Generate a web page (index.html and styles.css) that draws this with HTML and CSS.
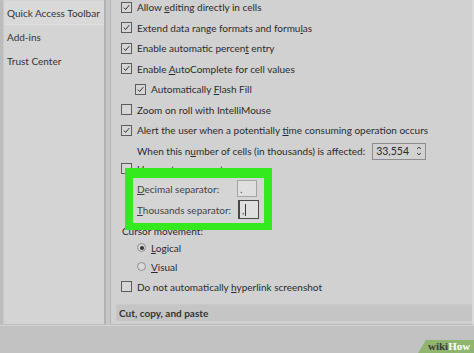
FILE: index.html
```html
<!DOCTYPE html>
<html>
<head>
<meta charset="utf-8">
<link rel="stylesheet" href="styles.css">
</head>
<body>
<div class="screen">
  <div class="window">
    <div class="edge"></div>
    <nav class="sidebar">
      <div class="nav-item selected">Quick Access Toolbar</div>
      <div class="nav-item">Add-ins</div>
      <div class="nav-item">Trust Center</div>
    </nav>
    <div class="gutter"></div>
    <main class="content">
      <div class="options">
        <div class="row r20"><span class="cb checked"><svg viewBox="0 0 11 11"><path d="M2.3 5.6 L4.4 7.9 L8.9 2.6"/></svg></span><span>Allow <u>e</u>diting directly in cells</span></div>
        <div class="row r20"><span class="cb checked"><svg viewBox="0 0 11 11"><path d="M2.3 5.6 L4.4 7.9 L8.9 2.6"/></svg></span><span>Extend data range formats and formu<u>l</u>as</span></div>
        <div class="row r20"><span class="cb checked"><svg viewBox="0 0 11 11"><path d="M2.3 5.6 L4.4 7.9 L8.9 2.6"/></svg></span><span>Enable automatic percen<u>t</u> entry</span></div>
        <div class="row r20"><span class="cb checked"><svg viewBox="0 0 11 11"><path d="M2.3 5.6 L4.4 7.9 L8.9 2.6"/></svg></span><span>Enable <u>A</u>utoComplete for cell values</span></div>
        <div class="row r20 indent"><span class="cb checked"><svg viewBox="0 0 11 11"><path d="M2.3 5.6 L4.4 7.9 L8.9 2.6"/></svg></span><span>Automatically <u>F</u>lash Fill</span></div>
        <div class="row r20"><span class="cb"></span><span>Zoom on roll with IntelliMouse</span></div>
        <div class="row r20"><span class="cb checked"><svg viewBox="0 0 11 11"><path d="M2.3 5.6 L4.4 7.9 L8.9 2.6"/></svg></span><span>Alert the user when a potentially <u>t</u>ime consuming operation occurs</span></div>
        <div class="row r21 sub"><span>When this n<u>u</u>mber of cells (in thousands) is affected:</span>
          <span class="spin"><span class="spin-val">33,554</span><svg class="spin-arrows" viewBox="0 0 6 12"><path d="M1.2 4 L3 2 L4.8 4"/><path d="M1.2 8 L3 10 L4.8 8"/></svg></span>
        </div>
        <div class="row r17 custom"><span class="cb"></span><span>Use custom separators</span></div>
        <div class="row r20 sep"><span class="sep-label"><u>D</u>ecimal separator:</span><span class="sep-box">.</span></div>
        <div class="row r22 sep"><span class="sep-label"><u>T</u>housands separator:</span><span class="sep-box focus">,<span class="caret"></span></span></div>
        <div class="row r18 plain"><span>Cursor movement:</span></div>
        <div class="row r18 radio-row"><span class="radio on"></span><span><u>L</u>ogical</span></div>
        <div class="row r20 radio-row"><span class="radio"></span><span><u>V</u>isual</span></div>
        <div class="row r20"><span class="cb"></span><span>Do not automatically <u>h</u>yperlink screenshot</span></div>
      </div>
      <div class="section-head">Cut, copy, and paste</div>
    </main>
  </div>
  <div class="footer"></div>
  <div class="highlight"></div>
  <div class="badge"><span class="wiki">wiki</span><span class="how">How</span></div>
</div>
</body>
</html>
```
FILE: styles.css
```css
* { box-sizing: border-box; }
html, body { margin: 0; padding: 0; }
body {
  width: 474px;
  height: 353px;
  overflow: hidden;
  background: #c3c3c3;
  font-family: Lato, "Open Sans", "Noto Sans", sans-serif;
  font-size: 10px;
  color: #2b2b2b;
}
.screen {
  position: relative;
  width: 474px;
  height: 353px;
  overflow: hidden;
}
.window {
  display: flex;
  height: 325px;
}
.edge {
  width: 4px;
  background: #bcbcbc;
  border-right: 1px solid #c9c9c9;
}
.sidebar {
  width: 102px;
  background: #d4d4d4;
  border-right: 2px solid #b2b2b2;
  border-bottom: 1px solid #bdbdbd;
  padding-top: 1px;
}
.nav-item {
  height: 24px;
  display: flex;
  align-items: center;
  padding-left: 3px;
  white-space: nowrap;
  color: #333;
}
.nav-item.selected {
  background: #d9d9d9;
  border-bottom: 1px solid #e0e0e0;
}
.gutter {
  width: 5px;
  background: #c7c7c7;
  border-right: 1px solid #b5b5b5;
}
.content {
  flex: 1;
  background: #d1d1d1;
  padding-left: 5px;
  border-right: 2px solid #dadada;
  border-bottom: 1px solid #bcbcbc;
  display: flex;
  flex-direction: column;
}
.options {
  margin-top: -3px;
  padding-left: 5px;
}
.row {
  display: flex;
  align-items: center;
  white-space: nowrap;
}
.r17 { height: 17px; }
.r18 { height: 18px; }
.r20 { height: 20.5px; }
.r21 { height: 21px; }
.r22 { height: 22px; }
.row.r20.sep { height: 20px; }
.row.radio-row.r20 { height: 20px; }
.custom { align-items: flex-start; padding-top: 1px; }
.indent { padding-left: 14px; }
.sub { padding-left: 16px; }
.plain { padding-left: 1px; padding-top: 3px; }
.cb {
  width: 11px;
  height: 11px;
  border: 1px solid #5c5c5c;
  background: #d6d6d6;
  margin-right: 5px;
  flex: none;
  display: flex;
}
.cb svg {
  width: 9px;
  height: 9px;
  fill: none;
  stroke: #2a2a2a;
  stroke-width: 1.2;
}
.spin {
  margin-left: 7px;
  width: 54px;
  height: 17px;
  border: 1px solid #8d8d8d;
  display: flex;
  align-items: center;
  padding-left: 3px;
  font-size: 10.5px;
}
.spin-val { flex: 1; }
.spin-arrows {
  width: 6px;
  height: 12px;
  margin-right: 3px;
  fill: none;
  stroke: #444;
  stroke-width: 1;
}
.sep { padding-left: 16px; }
.sep-label { width: 100px; }
.sep-box {
  width: 20px;
  height: 17px;
  border: 1px solid #9a9a9a;
  background: #dcdcdc;
  padding-left: 2px;
  display: flex;
  align-items: center;
  line-height: 1;
}
.sep-box.focus {
  width: 21px;
  height: 19px;
  margin-left: 1px;
  border: 1px solid #333;
  border-left-width: 2px;
}
.caret {
  width: 1px;
  height: 12px;
  background: #222;
  margin-left: 1px;
}
.radio-row { padding-left: 16px; }
.radio {
  width: 9px;
  height: 9px;
  border-radius: 50%;
  border: 1px solid #8e8e8e;
  background: #d8d8d8;
  margin-right: 5px;
  flex: none;
  display: flex;
  align-items: center;
  justify-content: center;
}
.radio.on::after {
  content: "";
  width: 4px;
  height: 4px;
  border-radius: 50%;
  background: #333;
}
.section-head {
  margin-top: 6.5px;
  height: 17px;
  background: #c5c5c5;
  border-top: 1px solid #c9c9c9;
  display: flex;
  align-items: center;
  padding-left: 3px;
  font-weight: 700;
  color: #333;
}
.footer {
  height: 28px;
  background: #c2c2c2;
  border-top: 1px solid #d3d3d3;
}
.highlight {
  position: absolute;
  left: 125px;
  top: 168px;
  width: 147px;
  height: 62px;
  border-style: solid;
  border-color: #34ea1f;
  border-width: 10px 8px 7px 8px;
  background: rgba(255, 255, 255, 0.1);
}
.badge {
  position: absolute;
  left: 418px;
  top: 340px;
  width: 56px;
  height: 13px;
  background: #8fb56f;
  clip-path: polygon(14% 0, 100% 0, 100% 100%, 0 100%);
  font-family: "Liberation Serif", "DejaVu Serif", serif;
  font-weight: 700;
  font-size: 11px;
  line-height: 13px;
  padding-left: 10px;
  white-space: nowrap;
  overflow: hidden;
}
.wiki { color: #3a3a3a; }
.how { color: #ffffff; }
```
